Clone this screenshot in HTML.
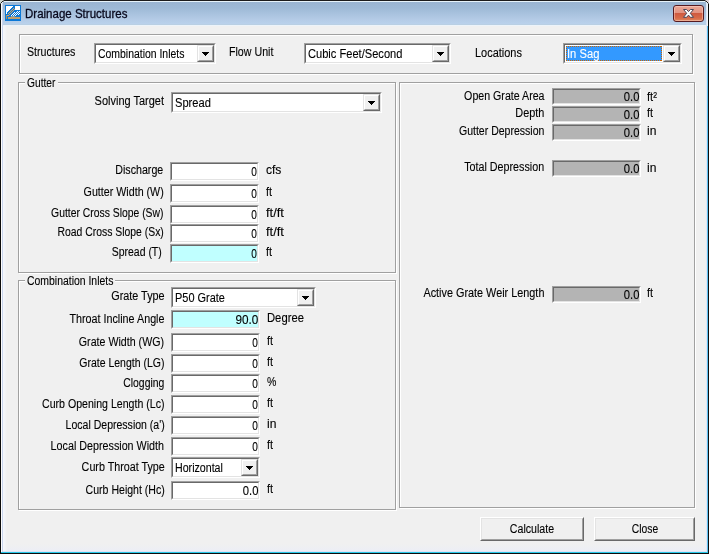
<!DOCTYPE html>
<html><head><meta charset="utf-8"><title>Drainage Structures</title>
<style>
html,body{margin:0;padding:0;}
body{width:709px;height:554px;position:relative;overflow:hidden;background:#f0f0f0;
 font-family:"Liberation Sans",sans-serif;font-size:12.5px;line-height:14px;color:#000;}
div,span.t,svg.a{position:absolute;box-sizing:content-box;}
span.t{white-space:pre;-webkit-text-stroke:0.12px currentColor;}
.fw{border:1px solid #fff;}
.fg{border:1px solid #a0a0a0;}
.sk{border:1px solid;border-color:#a0a0a0 #fff #fff #a0a0a0;}
.sk>i{position:absolute;left:0;top:0;right:0;bottom:0;border:1px solid;border-color:#696969 #e3e3e3 #e3e3e3 #696969;}
.cb{border:1px solid;border-color:#e3e3e3 #696969 #696969 #e3e3e3;background:#f0f0f0;}
.cb>i{position:absolute;left:0;top:0;right:0;bottom:0;border:1px solid;border-color:#fff #a0a0a0 #a0a0a0 #fff;}
.cb>b{position:absolute;left:4px;top:6px;width:7px;height:4px;
 background:linear-gradient(#000,#000) 0 0/7px 1px no-repeat,linear-gradient(#000,#000) 1px 1px/5px 1px no-repeat,
 linear-gradient(#000,#000) 2px 2px/3px 1px no-repeat,linear-gradient(#000,#000) 3px 3px/1px 1px no-repeat;}
.bt{border:1px solid;border-color:#fff #696969 #696969 #fff;background:#f0f0f0;}
.bt>i{position:absolute;left:0;top:0;right:0;bottom:0;border:1px solid;border-color:#e3e3e3 #a0a0a0 #a0a0a0 #e3e3e3;}
.focus{background:
 repeating-linear-gradient(90deg,#cc6600 0 1px,transparent 1px 2px) 0 0/100% 1px no-repeat,
 repeating-linear-gradient(90deg,#cc6600 0 1px,transparent 1px 2px) 0 100%/100% 1px no-repeat,
 repeating-linear-gradient(180deg,#cc6600 0 1px,transparent 1px 2px) 0 0/1px 100% no-repeat,
 repeating-linear-gradient(180deg,#cc6600 0 1px,transparent 1px 2px) 100% 0/1px 100% no-repeat;}
</style></head><body>
<!-- window chrome -->
<div style="left:0;top:0;width:709px;height:26px;background:linear-gradient(#99b4d1 0,#9db9d6 30%,#b4cbe6 75%,#bcd4ee 100%);"></div>
<div style="left:0;top:24px;width:709px;height:1px;background:#b9cfe3;"></div>
<div style="left:0;top:25px;width:709px;height:1px;background:#ecf3fa;"></div>
<div style="left:0;top:1px;width:709px;height:1px;background:#e6f3fa;"></div>
<div style="left:0;top:0;width:709px;height:1px;background:#1c1c1c;"></div>
<div style="left:2px;top:2px;width:1px;height:550px;background:#c8d4ec;"></div>
<div style="left:3px;top:544px;width:704px;height:7px;background:linear-gradient(#f0f0f0,#eceef5);"></div>
<div style="left:3px;top:26px;width:4px;height:525px;background:linear-gradient(90deg,#f6f8fd,#f0f0f0);"></div>
<div style="left:1px;top:1px;width:1px;height:552px;background:#fdfdfd;"></div>
<div style="left:0;top:2px;width:1px;height:552px;background:#0c0c0c;"></div>
<div style="left:706px;top:2px;width:1px;height:550px;background:#dfe5f5;"></div>
<div style="left:707px;top:2px;width:1px;height:24px;background:#eef6fb;"></div>
<div style="left:707px;top:26px;width:1px;height:527px;background:#5cc0ee;"></div>
<div style="left:708px;top:2px;width:1px;height:552px;background:#0c0c0c;"></div>
<div style="left:3px;top:551px;width:704px;height:1px;background:#dde2f4;"></div>
<div style="left:1px;top:552px;width:707px;height:1px;background:#28c8e8;"></div>
<div style="left:0;top:553px;width:709px;height:1px;background:#0c0c0c;"></div>
<!-- corners -->
<div style="left:0px;top:0px;width:3px;height:1px;background:#d0d6d0;"></div>
<div style="left:3px;top:0px;width:1px;height:1px;background:#777;"></div>
<div style="left:0px;top:1px;width:2px;height:1px;background:#d0d6d0;"></div>
<div style="left:2px;top:1px;width:1px;height:1px;background:#222;"></div>
<div style="left:3px;top:1px;width:1px;height:1px;background:#888;"></div>
<div style="left:0px;top:2px;width:1px;height:1px;background:#d0d6d0;"></div>
<div style="left:1px;top:2px;width:1px;height:1px;background:#222;"></div>
<div style="left:2px;top:2px;width:1px;height:1px;background:#e8eef4;"></div>
<div style="left:0px;top:3px;width:1px;height:1px;background:#666;"></div>
<div style="left:1px;top:3px;width:1px;height:1px;background:#f0f4f8;"></div>
<div style="left:706px;top:0px;width:3px;height:1px;background:#dcd2d6;"></div>
<div style="left:705px;top:0px;width:1px;height:1px;background:#777;"></div>
<div style="left:707px;top:1px;width:2px;height:1px;background:#dcd2d6;"></div>
<div style="left:706px;top:1px;width:1px;height:1px;background:#222;"></div>
<div style="left:705px;top:1px;width:1px;height:1px;background:#888;"></div>
<div style="left:708px;top:2px;width:1px;height:1px;background:#dcd2d6;"></div>
<div style="left:707px;top:2px;width:1px;height:1px;background:#222;"></div>
<div style="left:706px;top:2px;width:1px;height:1px;background:#dcecf6;"></div>
<div style="left:708px;top:3px;width:1px;height:1px;background:#666;"></div>
<div style="left:707px;top:3px;width:1px;height:1px;background:#c8e6f6;"></div>
<!-- icon -->
<svg class="a" style="left:5px;top:5px" width="16" height="16" viewBox="0 0 16 16" shape-rendering="crispEdges">
<rect width="16" height="16" fill="#0a78d7"/>
<polygon points="1,1 8,1 1,8" fill="#fff"/>
<rect x="10" y="1" width="5" height="4" fill="#fff"/>
<rect x="1" y="8" width="1" height="1" fill="#fff"/>
<g fill="#fff"><rect x="12" y="6" width="1" height="1"/><rect x="14" y="6" width="1" height="1"/><rect x="9" y="7" width="1" height="1"/><rect x="11" y="7" width="1" height="1"/><rect x="13" y="7" width="1" height="1"/><rect x="8" y="8" width="1" height="1"/><rect x="10" y="8" width="1" height="1"/><rect x="12" y="8" width="1" height="1"/><rect x="14" y="8" width="1" height="1"/><rect x="7" y="9" width="1" height="1"/><rect x="9" y="9" width="1" height="1"/><rect x="11" y="9" width="1" height="1"/><rect x="13" y="9" width="1" height="1"/><rect x="6" y="10" width="1" height="1"/><rect x="8" y="10" width="1" height="1"/><rect x="10" y="10" width="1" height="1"/><rect x="7" y="11" width="1" height="1"/><rect x="9" y="11" width="1" height="1"/></g>
<g fill="#d9a566"><rect x="8" y="3" width="1" height="1"/><rect x="7" y="4" width="1" height="1"/><rect x="9" y="4" width="1" height="1"/><rect x="6" y="5" width="1" height="1"/><rect x="8" y="5" width="1" height="1"/><rect x="5" y="6" width="1" height="1"/><rect x="7" y="6" width="1" height="1"/><rect x="4" y="7" width="1" height="1"/><rect x="6" y="7" width="1" height="1"/><rect x="3" y="8" width="1" height="1"/><rect x="5" y="8" width="1" height="1"/><rect x="4" y="9" width="1" height="1"/><rect x="3" y="10" width="1" height="1"/><rect x="2" y="10" width="1" height="1"/></g>
<rect x="3" y="12" width="12" height="2" fill="#bfa070"/>
<rect x="6" y="11" width="4" height="1" fill="#8aa0a8"/>
<rect x="1" y="10" width="1" height="4" fill="#a89060"/>
</svg>
<!-- close button -->
<div style="left:673px;top:5px;width:29px;height:15px;border:1px solid #551a20;border-radius:3px;background:linear-gradient(#eaa796 0,#e29280 47%,#cf5a40 50%,#d86a48 80%,#e08a60 100%);box-shadow:inset 0 0 0 1px rgba(255,220,210,.45);"></div>
<svg class="a" style="left:681px;top:8px" width="15" height="11" viewBox="0 0 15 11">
<path d="M2.5 1.5 L5.6 1.5 L7.5 3.6 L9.4 1.5 L12.5 1.5 L9.3 5.3 L12.5 9.3 L9.4 9.3 L7.5 7.1 L5.6 9.3 L2.5 9.3 L5.7 5.3 Z" fill="#fff" stroke="#4a4658" stroke-width="1" stroke-linejoin="round"/>
</svg>
<div class="fw" style="left:20px;top:35px;width:672px;height:38px;"></div>
<div class="fg" style="left:19px;top:34px;width:672px;height:38px;"></div>
<div class="fw" style="left:19px;top:83px;width:376px;height:189px;"></div>
<div class="fg" style="left:18px;top:82px;width:376px;height:189px;"></div>
<div style="left:25px;top:80px;width:33px;height:6px;background:#f0f0f0;"></div>
<div class="fw" style="left:19px;top:281px;width:376px;height:228px;"></div>
<div class="fg" style="left:18px;top:280px;width:376px;height:228px;"></div>
<div style="left:25px;top:278px;width:90px;height:6px;background:#f0f0f0;"></div>
<div class="fw" style="left:400px;top:83px;width:294px;height:424px;"></div>
<div class="fg" style="left:399px;top:82px;width:294px;height:424px;"></div>
<div class="sk" style="left:94px;top:43px;width:120px;height:19px;background:#fff;"><i></i></div>
<div class="cb" style="left:197px;top:45px;width:15px;height:15px;"><i></i><b></b></div>
<div class="sk" style="left:304px;top:43px;width:145px;height:19px;background:#fff;"><i></i></div>
<div class="cb" style="left:432px;top:45px;width:15px;height:15px;"><i></i><b></b></div>
<div class="sk" style="left:563px;top:43px;width:117px;height:19px;background:#fff;"><i></i></div>
<div class="cb" style="left:663px;top:45px;width:15px;height:15px;"><i></i><b></b></div>
<div style="left:566px;top:46px;width:96px;height:15px;background:#3399ff;"></div>
<div class="focus" style="left:566px;top:46px;width:96px;height:15px;"></div>
<div class="sk" style="left:171px;top:92px;width:209px;height:19px;background:#fff;"><i></i></div>
<div class="cb" style="left:363px;top:94px;width:15px;height:15px;"><i></i><b></b></div>
<div class="sk" style="left:170px;top:162px;width:87px;height:17px;background:#fff;"><i></i></div>
<div class="sk" style="left:170px;top:184px;width:87px;height:17px;background:#fff;"><i></i></div>
<div class="sk" style="left:170px;top:205px;width:87px;height:17px;background:#fff;"><i></i></div>
<div class="sk" style="left:170px;top:224px;width:87px;height:17px;background:#fff;"><i></i></div>
<div class="sk" style="left:170px;top:244px;width:87px;height:17px;background:#c0ffff;"><i></i></div>
<div class="sk" style="left:171px;top:287px;width:143px;height:19px;background:#fff;"><i></i></div>
<div class="cb" style="left:297px;top:289px;width:15px;height:15px;"><i></i><b></b></div>
<div class="sk" style="left:171px;top:310px;width:87px;height:17px;background:#c0ffff;"><i></i></div>
<div class="sk" style="left:171px;top:333px;width:87px;height:17px;background:#fff;"><i></i></div>
<div class="sk" style="left:171px;top:354px;width:87px;height:17px;background:#fff;"><i></i></div>
<div class="sk" style="left:171px;top:374px;width:87px;height:17px;background:#fff;"><i></i></div>
<div class="sk" style="left:171px;top:395px;width:87px;height:17px;background:#fff;"><i></i></div>
<div class="sk" style="left:171px;top:416px;width:87px;height:17px;background:#fff;"><i></i></div>
<div class="sk" style="left:171px;top:437px;width:87px;height:17px;background:#fff;"><i></i></div>
<div class="sk" style="left:171px;top:481px;width:87px;height:17px;background:#fff;"><i></i></div>
<div class="sk" style="left:171px;top:457px;width:87px;height:19px;background:#fff;"><i></i></div>
<div class="cb" style="left:241px;top:459px;width:15px;height:15px;"><i></i><b></b></div>
<div class="sk" style="left:552px;top:88px;width:87px;height:15px;background:#b4b4b4;"><i></i></div>
<div class="sk" style="left:552px;top:106px;width:87px;height:15px;background:#b4b4b4;"><i></i></div>
<div class="sk" style="left:552px;top:124px;width:87px;height:15px;background:#b4b4b4;"><i></i></div>
<div class="sk" style="left:552px;top:160px;width:87px;height:15px;background:#b4b4b4;"><i></i></div>
<div class="sk" style="left:552px;top:286px;width:87px;height:15px;background:#b4b4b4;"><i></i></div>
<div class="bt" style="left:480px;top:517px;width:102px;height:22px;"><i></i></div>
<div class="bt" style="left:594px;top:517px;width:99px;height:22px;"><i></i></div>
<div style="left:0;top:0;width:709px;height:554px;will-change:transform;">
<span class="t" style="left:25px;top:7.00px;transform:scaleX(0.9211);transform-origin:0 0;color:#08081c;-webkit-text-stroke:0.3px #08081c;">Drainage Structures</span>
<span class="t" style="left:27px;top:45.00px;transform:scaleX(0.8496);transform-origin:0 0;">Structures</span>
<span class="t" style="left:98px;top:47.00px;transform:scaleX(0.8345);transform-origin:0 0;">Combination Inlets</span>
<span class="t" style="left:229px;top:45.00px;transform:scaleX(0.8523);transform-origin:0 0;">Flow Unit</span>
<span class="t" style="left:308px;top:47.00px;transform:scaleX(0.8879);transform-origin:0 0;">Cubic Feet/Second</span>
<span class="t" style="left:475px;top:46.00px;transform:scaleX(0.8764);transform-origin:0 0;">Locations</span>
<span class="t" style="left:567px;top:47.00px;transform:scaleX(0.8965);transform-origin:0 0;color:#fff;">In Sag</span>
<span class="t" style="left:27px;top:76.00px;transform:scaleX(0.8173);transform-origin:0 0;">Gutter</span>
<span class="t" style="left:27px;top:274.00px;transform:scaleX(0.8345);transform-origin:0 0;">Combination Inlets</span>
<span class="t" style="right:545px;top:94.00px;transform:scaleX(0.8785);transform-origin:100% 0;">Solving Target</span>
<span class="t" style="left:175px;top:96.00px;transform:scaleX(0.8905);transform-origin:0 0;">Spread</span>
<span class="t" style="right:545.5px;top:163.00px;transform:scaleX(0.8529);transform-origin:100% 0;">Discharge</span>
<span class="t" style="right:452px;top:165.00px;transform:scaleX(0.8054);transform-origin:100% 0;">0</span>
<span class="t" style="left:266px;top:163.00px;transform:scaleX(0.9634);transform-origin:0 0;">cfs</span>
<span class="t" style="right:545.5px;top:185.00px;transform:scaleX(0.8553);transform-origin:100% 0;">Gutter Width (W)</span>
<span class="t" style="right:452px;top:187.00px;transform:scaleX(0.8054);transform-origin:100% 0;">0</span>
<span class="t" style="left:266px;top:185.00px;transform:scaleX(0.8629);transform-origin:0 0;">ft</span>
<span class="t" style="right:545.5px;top:206.00px;transform:scaleX(0.8297);transform-origin:100% 0;">Gutter Cross Slope (Sw)</span>
<span class="t" style="right:452px;top:208.00px;transform:scaleX(0.8054);transform-origin:100% 0;">0</span>
<span class="t" style="left:266px;top:206.00px;transform:scaleX(1.0302);transform-origin:0 0;">ft/ft</span>
<span class="t" style="right:545.5px;top:225.00px;transform:scaleX(0.8324);transform-origin:100% 0;">Road Cross Slope (Sx)</span>
<span class="t" style="right:452px;top:227.00px;transform:scaleX(0.8054);transform-origin:100% 0;">0</span>
<span class="t" style="left:266px;top:225.00px;transform:scaleX(1.0302);transform-origin:0 0;">ft/ft</span>
<span class="t" style="right:547.5px;top:245.00px;transform:scaleX(0.8368);transform-origin:100% 0;">Spread (T)</span>
<span class="t" style="right:452px;top:247.00px;transform:scaleX(0.8054);transform-origin:100% 0;">0</span>
<span class="t" style="left:266px;top:245.00px;transform:scaleX(0.8629);transform-origin:0 0;">ft</span>
<span class="t" style="right:544.5px;top:289.00px;transform:scaleX(0.8668);transform-origin:100% 0;">Grate Type</span>
<span class="t" style="left:175px;top:291.00px;transform:scaleX(0.8757);transform-origin:0 0;">P50 Grate</span>
<span class="t" style="right:544.5px;top:312.00px;transform:scaleX(0.8606);transform-origin:100% 0;">Throat Incline Angle</span>
<span class="t" style="right:451px;top:313.00px;transform:scaleX(0.9407);transform-origin:100% 0;">90.0</span>
<span class="t" style="left:267px;top:311.00px;transform:scaleX(0.9000);transform-origin:0 0;">Degree</span>
<span class="t" style="right:544.5px;top:335.00px;transform:scaleX(0.8519);transform-origin:100% 0;">Grate Width (WG)</span>
<span class="t" style="right:451px;top:336.00px;transform:scaleX(0.8054);transform-origin:100% 0;">0</span>
<span class="t" style="left:267px;top:334.00px;transform:scaleX(0.8629);transform-origin:0 0;">ft</span>
<span class="t" style="right:544.5px;top:356.00px;transform:scaleX(0.8398);transform-origin:100% 0;">Grate Length (LG)</span>
<span class="t" style="right:451px;top:357.00px;transform:scaleX(0.8054);transform-origin:100% 0;">0</span>
<span class="t" style="left:267px;top:355.00px;transform:scaleX(0.8629);transform-origin:0 0;">ft</span>
<span class="t" style="right:544.5px;top:376.00px;transform:scaleX(0.8329);transform-origin:100% 0;">Clogging</span>
<span class="t" style="right:451px;top:377.00px;transform:scaleX(0.8054);transform-origin:100% 0;">0</span>
<span class="t" style="left:267px;top:375.00px;transform:scaleX(0.8449);transform-origin:0 0;">%</span>
<span class="t" style="right:544.5px;top:397.00px;transform:scaleX(0.8476);transform-origin:100% 0;">Curb Opening Length (Lc)</span>
<span class="t" style="right:451px;top:398.00px;transform:scaleX(0.8054);transform-origin:100% 0;">0</span>
<span class="t" style="left:267px;top:396.00px;transform:scaleX(0.8629);transform-origin:0 0;">ft</span>
<span class="t" style="right:544.5px;top:418.00px;transform:scaleX(0.8418);transform-origin:100% 0;">Local Depression (a&#39;)</span>
<span class="t" style="right:451px;top:419.00px;transform:scaleX(0.8054);transform-origin:100% 0;">0</span>
<span class="t" style="left:267px;top:417.00px;transform:scaleX(0.9657);transform-origin:0 0;">in</span>
<span class="t" style="right:544.5px;top:439.00px;transform:scaleX(0.8590);transform-origin:100% 0;">Local Depression Width</span>
<span class="t" style="right:451px;top:440.00px;transform:scaleX(0.8054);transform-origin:100% 0;">0</span>
<span class="t" style="left:267px;top:438.00px;transform:scaleX(0.8629);transform-origin:0 0;">ft</span>
<span class="t" style="right:544.5px;top:483.00px;transform:scaleX(0.8445);transform-origin:100% 0;">Curb Height (Hc)</span>
<span class="t" style="right:451px;top:484.00px;transform:scaleX(0.8970);transform-origin:100% 0;">0.0</span>
<span class="t" style="left:267px;top:482.00px;transform:scaleX(0.8629);transform-origin:0 0;">ft</span>
<span class="t" style="right:544.5px;top:460.00px;transform:scaleX(0.8593);transform-origin:100% 0;">Curb Throat Type</span>
<span class="t" style="left:175px;top:461.00px;transform:scaleX(0.8511);transform-origin:0 0;">Horizontal</span>
<span class="t" style="right:164.5px;top:89.00px;transform:scaleX(0.8507);transform-origin:100% 0;">Open Grate Area</span>
<span class="t" style="right:70px;top:90.00px;transform:scaleX(0.8970);transform-origin:100% 0;">0.0</span>
<span class="t" style="left:647px;top:90.00px;transform:scaleX(0.8911);transform-origin:0 0;">ft²</span>
<span class="t" style="right:164.5px;top:106.00px;transform:scaleX(0.8723);transform-origin:100% 0;">Depth</span>
<span class="t" style="right:70px;top:108.00px;transform:scaleX(0.8970);transform-origin:100% 0;">0.0</span>
<span class="t" style="left:647px;top:106.00px;transform:scaleX(0.8629);transform-origin:0 0;">ft</span>
<span class="t" style="right:164.5px;top:124.00px;transform:scaleX(0.8429);transform-origin:100% 0;">Gutter Depression</span>
<span class="t" style="right:70px;top:126.00px;transform:scaleX(0.8970);transform-origin:100% 0;">0.0</span>
<span class="t" style="left:647px;top:124.00px;transform:scaleX(0.9657);transform-origin:0 0;">in</span>
<span class="t" style="right:164.5px;top:160.00px;transform:scaleX(0.8581);transform-origin:100% 0;">Total Depression</span>
<span class="t" style="right:70px;top:162.00px;transform:scaleX(0.8970);transform-origin:100% 0;">0.0</span>
<span class="t" style="left:647px;top:161.00px;transform:scaleX(0.9657);transform-origin:0 0;">in</span>
<span class="t" style="right:164.5px;top:286.00px;transform:scaleX(0.8679);transform-origin:100% 0;">Active Grate Weir Length</span>
<span class="t" style="right:70px;top:288.00px;transform:scaleX(0.8970);transform-origin:100% 0;">0.0</span>
<span class="t" style="left:647px;top:286.00px;transform:scaleX(0.8629);transform-origin:0 0;">ft</span>
<span class="t" style="left:432px;width:200px;text-align:center;top:522.00px;transform:scaleX(0.8499);transform-origin:50% 0;">Calculate</span>
<span class="t" style="left:544.5px;width:200px;text-align:center;top:522.00px;transform:scaleX(0.8258);transform-origin:50% 0;">Close</span>
</div>
</body></html>
